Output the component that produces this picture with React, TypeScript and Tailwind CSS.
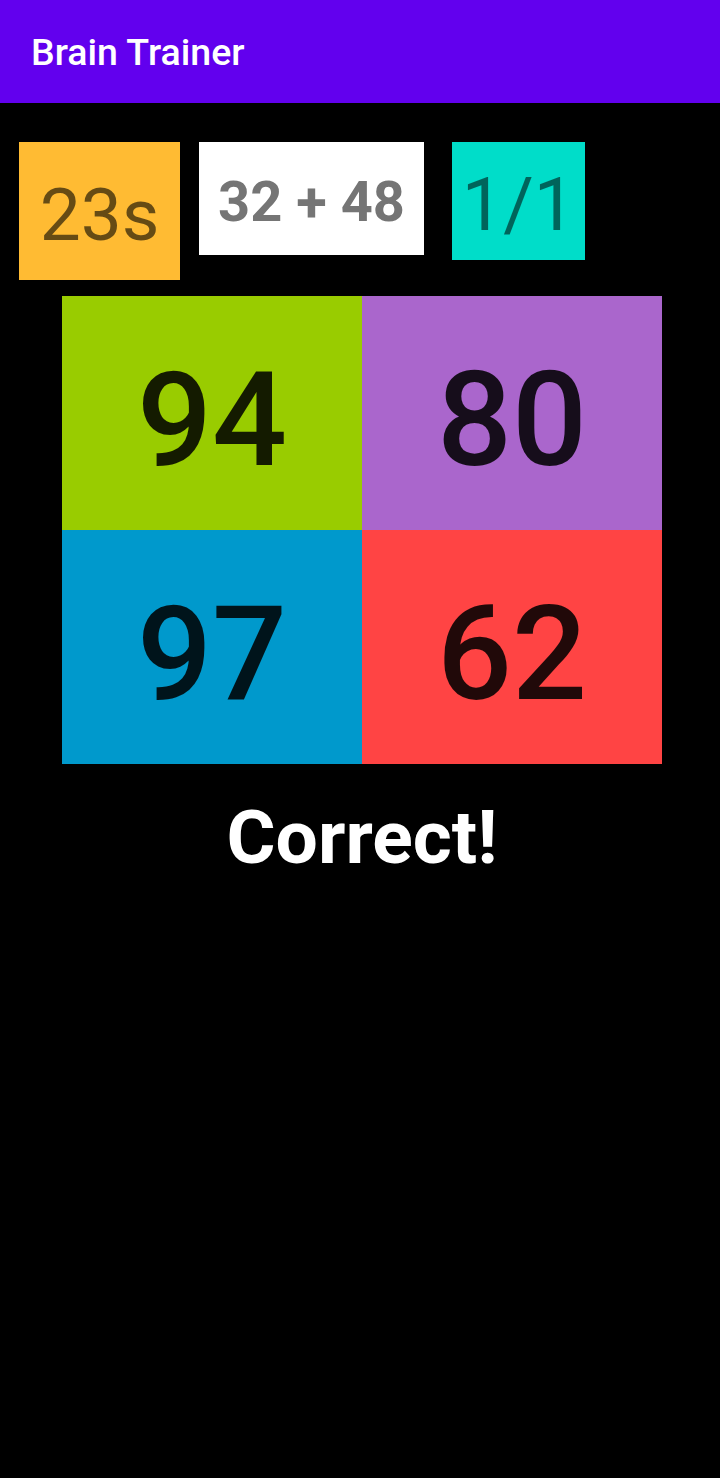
import React from "react";

const cells = [
  { value: 94, bg: "bg-[#99CC00]" },
  { value: 80, bg: "bg-[#AA66CC]" },
  { value: 97, bg: "bg-[#0099CC]" },
  { value: 62, bg: "bg-[#FF4444]" },
];

export default function App() {
  return (
    <div
      className="w-[720px] h-[1478px] bg-black flex flex-col"
      style={{ fontFamily: "Roboto, 'Liberation Sans', sans-serif" }}
    >
      {/* App bar */}
      <header className="h-[103px] bg-[#6200EE] flex items-center pl-[31px] pt-[2px] shrink-0">
        <h1 className="text-white text-[37.5px] font-medium leading-none">Brain Trainer</h1>
      </header>

      {/* Timer, question, score */}
      <div className="flex items-start pt-[39px] pl-[19px]">
        <div className="w-[161px] h-[138px] bg-[#FFBB33] flex items-center justify-center pt-[8px]">
          <span className="text-[73px] leading-none text-black/60">23s</span>
        </div>
        <div className="ml-[19px] w-[225px] h-[113px] bg-white flex items-center justify-center pt-[6px]">
          <span className="text-[56px] font-bold leading-none text-[#757575]">32 + 48</span>
        </div>
        <div className="ml-[28px] w-[133px] h-[118px] bg-[#00DDC9] flex items-center justify-center pt-[8px]">
          <span className="text-[74px] leading-none text-black/55">1/1</span>
        </div>
      </div>

      {/* Answer grid */}
      <div className="mt-[16px] ml-[62px] w-[600px] grid grid-cols-2">
        {cells.map((c) => (
          <button
            key={c.value}
            className={`${c.bg} h-[234px] flex items-center justify-center pt-[14px]`}
          >
            <span className="text-[132px] font-medium leading-none text-black/[.87]">
              {c.value}
            </span>
          </button>
        ))}
      </div>

      {/* Result */}
      <div className="ml-[4px] mt-[36px] text-center text-white text-[75px] font-bold leading-none">
        Correct!
      </div>
    </div>
  );
}
